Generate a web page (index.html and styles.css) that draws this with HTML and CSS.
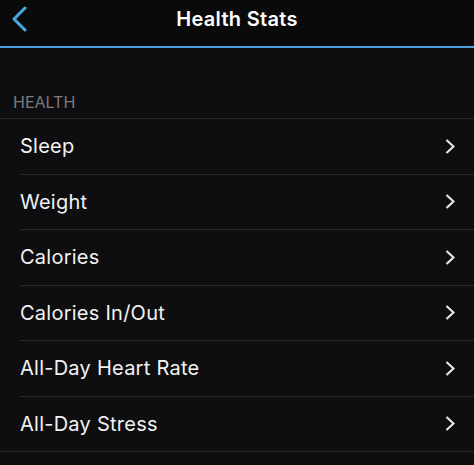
FILE: index.html
```html
<!DOCTYPE html>
<html>
    <head>
        <title>Health Stats</title>
        <meta charset="UTF-8">
        <meta name="viewport" content="width=device-width, initial-scale=1.0">
        <link rel="stylesheet" href="styles.css">
    </head>
    <body>
        <div class="barraTopo">
            <span class="voltar">
                <svg width="18" height="26" viewBox="0 0 18 26"><path d="M15 2 L4 13 L15 24" fill="none" stroke="#4aa8e0" stroke-width="3" stroke-linecap="round" stroke-linejoin="round"/></svg>
            </span>
            <h1 class="titulo">Health Stats</h1>
        </div>

        <div class="seccao">HEALTH</div>

        <ul class="lista">
            <li><span>Sleep</span><svg class="seta" width="10" height="15" viewBox="0 0 10 15"><path d="M1.5 1 L8.5 7.5 L1.5 14" fill="none" stroke="#e6e6e6" stroke-width="2.2"/></svg></li>
            <li><span>Weight</span><svg class="seta" width="10" height="15" viewBox="0 0 10 15"><path d="M1.5 1 L8.5 7.5 L1.5 14" fill="none" stroke="#e6e6e6" stroke-width="2.2"/></svg></li>
            <li><span>Calories</span><svg class="seta" width="10" height="15" viewBox="0 0 10 15"><path d="M1.5 1 L8.5 7.5 L1.5 14" fill="none" stroke="#e6e6e6" stroke-width="2.2"/></svg></li>
            <li><span>Calories In/Out</span><svg class="seta" width="10" height="15" viewBox="0 0 10 15"><path d="M1.5 1 L8.5 7.5 L1.5 14" fill="none" stroke="#e6e6e6" stroke-width="2.2"/></svg></li>
            <li><span>All-Day Heart Rate</span><svg class="seta" width="10" height="15" viewBox="0 0 10 15"><path d="M1.5 1 L8.5 7.5 L1.5 14" fill="none" stroke="#e6e6e6" stroke-width="2.2"/></svg></li>
            <li><span>All-Day Stress</span><svg class="seta" width="10" height="15" viewBox="0 0 10 15"><path d="M1.5 1 L8.5 7.5 L1.5 14" fill="none" stroke="#e6e6e6" stroke-width="2.2"/></svg></li>
        </ul>
    </body>
</html>
```

FILE: styles.css
```css
body {
    margin: 0;
    background: #0e0e10;
    color: #f2f2f2;
    font-family: Inter, "Noto Sans", sans-serif;
    height: 465px;
    overflow: hidden;
}

.barraTopo {
    position: relative;
    height: 46px;
    background: #0a0a0b;
    border-bottom: 2px solid #4a9fd8;
    display: flex;
    align-items: center;
    justify-content: center;
}

.voltar {
    position: absolute;
    left: 10px;
    top: 6px;
}

.titulo {
    margin: 0 0 8px 0;
    font-size: 20px;
    font-weight: 600;
    letter-spacing: 0.3px;
    color: #ffffff;
}

.seccao {
    padding: 45px 0 0 13px;
    height: 25px;
    font-size: 16px;
    line-height: 19px;
    color: #7b7b7e;
    border-bottom: 1px solid #2a2a2d;
}

.lista {
    list-style: none;
    margin: 0;
    padding: 0;
    border-bottom: 1px solid #2a2a2d;
}

.lista li {
    display: flex;
    align-items: center;
    justify-content: space-between;
    height: 54.5px;
    margin-left: 20px;
    padding-right: 19px;
    font-size: 20px;
    letter-spacing: 0.25px;
    border-bottom: 1px solid #2a2a2d;
}

.lista li:last-child {
    border-bottom: none;
}
```
